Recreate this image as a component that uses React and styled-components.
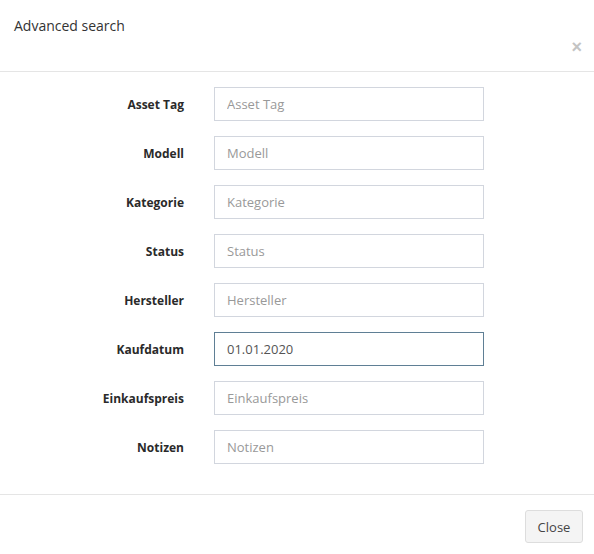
import React from "react";
import styled, { createGlobalStyle } from "styled-components";

const GlobalStyle = createGlobalStyle`
  html, body {
    margin: 0;
    padding: 0;
    background: #ffffff;
  }
  body {
    font-family: "Open Sans", "Noto Sans", sans-serif;
    color: #333333;
  }
`;

const fields = [
  { label: "Asset Tag", placeholder: "Asset Tag" },
  { label: "Modell", placeholder: "Modell" },
  { label: "Kategorie", placeholder: "Kategorie" },
  { label: "Status", placeholder: "Status" },
  { label: "Hersteller", placeholder: "Hersteller" },
  { label: "Kaufdatum", placeholder: "Kaufdatum", value: "01.01.2020", focused: true },
  { label: "Einkaufspreis", placeholder: "Einkaufspreis" },
  { label: "Notizen", placeholder: "Notizen" },
];

export default function App() {
  return (
    <>
      <GlobalStyle />
      <Modal>
        <Header>
          <Title>Advanced search</Title>
          <CloseX type="button" aria-label="Close">
            ×
          </CloseX>
        </Header>
        <Body>
          {fields.map((f) => (
            <Row key={f.label}>
              <Label>{f.label}</Label>
              <Input
                placeholder={f.placeholder}
                defaultValue={f.value}
                $focused={f.focused}
              />
            </Row>
          ))}
        </Body>
        <Footer>
          <Button type="button">Close</Button>
        </Footer>
      </Modal>
    </>
  );
}

const Modal = styled.div`
  width: 594px;
  height: 554px;
  display: flex;
  flex-direction: column;
  background: #ffffff;
`;

const Header = styled.div`
  display: flex;
  flex-direction: column;
  height: 72px;
  box-sizing: border-box;
  padding: 15px 12px 0 14px;
  border-bottom: 1px solid #e5e5e5;
`;

const Title = styled.div`
  font-size: 14px;
  line-height: 22px;
  color: #333333;
`;

const CloseX = styled.button`
  align-self: flex-end;
  margin-top: 1px;
  border: 0;
  padding: 0;
  background: transparent;
  font-family: "Liberation Sans", Arial, sans-serif;
  font-size: 18px;
  font-weight: bold;
  line-height: 18px;
  color: #c4c4c4;
  cursor: pointer;
`;

const Body = styled.div`
  display: flex;
  flex-direction: column;
  gap: 15px;
  padding: 15px 11px 30px 15px;
  border-bottom: 1px solid #e5e5e5;
`;

const Row = styled.div`
  display: grid;
  grid-template-columns: 169px 270px;
  column-gap: 30px;
  align-items: center;
`;

const Label = styled.div`
  text-align: right;
  font-size: 12px;
  font-weight: bold;
  color: #2a2a2a;
`;

const Input = styled.input`
  box-sizing: border-box;
  width: 270px;
  height: 34px;
  padding: 0 12px;
  border: 1px solid ${(p) => (p.$focused ? "#5f7f95" : "#d2d6de")};
  border-radius: 0;
  outline: none;
  font-family: "Open Sans", "Noto Sans", sans-serif;
  font-size: 13px;
  color: #555555;
  background: #ffffff;

  &::placeholder {
    color: #999999;
  }
`;

const Footer = styled.div`
  display: flex;
  justify-content: flex-end;
  padding: 15px 11px 10px 15px;
`;

const Button = styled.button`
  box-sizing: border-box;
  width: 58px;
  height: 33px;
  padding: 0;
  border: 1px solid #dddddd;
  border-radius: 3px;
  background: #f4f4f4;
  font-family: "Open Sans", "Noto Sans", sans-serif;
  font-size: 13px;
  color: #444444;
  cursor: pointer;
`;
